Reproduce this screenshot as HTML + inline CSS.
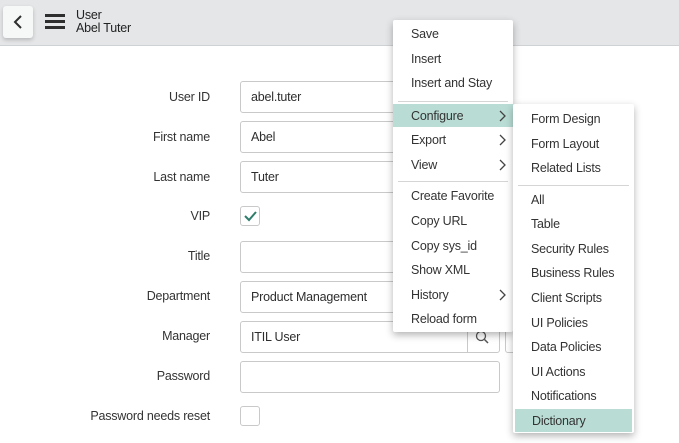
<!DOCTYPE html>
<html><head><style>
*{margin:0;padding:0;box-sizing:border-box}
body{width:679px;height:443px;overflow:hidden;background:#fff;font-family:"Liberation Sans",sans-serif;font-size:12.5px;letter-spacing:-0.2px;color:#2e2e2e;position:relative}
.hdr{position:absolute;left:0;top:0;width:679px;height:46px;background:#e4e6e8;border-bottom:1px solid #cfd2d5}
.back{position:absolute;left:3px;top:6px;width:30px;height:32px;background:#f6f7f7;border-radius:3px;box-shadow:0 2px 4px rgba(0,0,0,.2)}
.ham{position:absolute;left:45px;width:20px;height:3px;background:#2e2e2e}
.t{position:absolute;white-space:nowrap}
.lbl{position:absolute;right:469px;white-space:nowrap;color:#333}
.inp{position:absolute;left:240px;height:32px;border:1px solid #c9c9c9;border-radius:3px;background:#fff;padding-left:10px;line-height:31px}
.cb{position:absolute;left:240px;width:20px;height:20px;border:1px solid #c9c9c9;border-radius:3px;background:#fff}
.menu{position:absolute;background:#fff;box-shadow:0 3px 8px rgba(0,0,0,.3);border-radius:2px}
.mi{position:absolute;left:0;right:0;height:23px;line-height:25px;padding-left:18px;color:#333;white-space:nowrap}
.hl{background:#b9ddd5}
.sep{position:absolute;left:5px;right:5px;height:1px;background:#d5d5d5}
.ar{position:absolute;right:6px;top:6px}
</style></head><body>
<div class="hdr">
<div class="back"><svg width="30" height="32"><path d="M18 10 L12 16 L18 22" stroke="#2e2e2e" stroke-width="2" fill="none"/></svg></div>
<div class="ham" style="top:14px"></div><div class="ham" style="top:20px"></div><div class="ham" style="top:26px"></div>
<div class="t" style="left:76px;top:8px;color:#222">User</div>
<div class="t" style="left:76px;top:21px;color:#222">Abel Tuter</div>
</div>

<div class="lbl" style="top:90px">User ID</div>
<div class="inp" style="top:81px;width:270px">abel.tuter</div>
<div class="lbl" style="top:130px">First name</div>
<div class="inp" style="top:121px;width:270px">Abel</div>
<div class="lbl" style="top:170px">Last name</div>
<div class="inp" style="top:161px;width:270px">Tuter</div>
<div class="lbl" style="top:209px">VIP</div>
<div class="cb" style="top:206px"><svg width="18" height="18"><path d="M4 9 L8 13 L15 5" stroke="#2e7d6b" stroke-width="2" fill="none"/></svg></div>
<div class="lbl" style="top:249px">Title</div>
<div class="inp" style="top:241px;width:270px"></div>
<div class="lbl" style="top:289px">Department</div>
<div class="inp" style="top:281px;width:270px">Product Management</div>
<div class="lbl" style="top:329px">Manager</div>
<div class="inp" style="top:321px;width:260px">ITIL User</div>
<div style="position:absolute;left:467px;top:322px;width:1px;height:30px;background:#c9c9c9"></div>
<svg style="position:absolute;left:474px;top:329px" width="16" height="16"><circle cx="7" cy="7" r="4.5" stroke="#555" stroke-width="1.3" fill="none"/><path d="M10.5 10.5 L14 14" stroke="#555" stroke-width="1.5"/></svg>
<div class="inp" style="top:321px;left:505px;width:20px"></div>
<div class="lbl" style="top:369px">Password</div>
<div class="inp" style="top:361px;width:260px"></div>
<div class="lbl" style="top:409px">Password needs reset</div>
<div class="cb" style="top:406px"></div>

<div class="menu" style="left:393px;top:20px;width:120px;height:312px">
<div class="mi" style="top:2px">Save</div>
<div class="mi" style="top:27px">Insert</div>
<div class="mi" style="top:51px">Insert and Stay</div>
<div class="sep" style="top:81px"></div>
<div class="mi hl" style="top:84px">Configure<svg class="ar" width="10" height="12"><path d="M3 1 L8 6 L3 11" stroke="#444" stroke-width="1.3" fill="none"/></svg></div>
<div class="mi" style="top:108px">Export<svg class="ar" width="10" height="12"><path d="M3 1 L8 6 L3 11" stroke="#444" stroke-width="1.3" fill="none"/></svg></div>
<div class="mi" style="top:133px">View<svg class="ar" width="10" height="12"><path d="M3 1 L8 6 L3 11" stroke="#444" stroke-width="1.3" fill="none"/></svg></div>
<div class="sep" style="top:161px"></div>
<div class="mi" style="top:164px">Create Favorite</div>
<div class="mi" style="top:189px">Copy URL</div>
<div class="mi" style="top:214px">Copy sys_id</div>
<div class="mi" style="top:238px">Show XML</div>
<div class="mi" style="top:263px">History<svg class="ar" width="10" height="12"><path d="M3 1 L8 6 L3 11" stroke="#444" stroke-width="1.3" fill="none"/></svg></div>
<div class="mi" style="top:287px">Reload form</div>
</div>

<div class="menu" style="left:513px;top:104px;width:121px;height:329px">
<div class="mi" style="top:3px">Form Design</div>
<div class="mi" style="top:28px">Form Layout</div>
<div class="mi" style="top:52px">Related Lists</div>
<div class="sep" style="top:81px"></div>
<div class="mi" style="top:84px">All</div>
<div class="mi" style="top:108px">Table</div>
<div class="mi" style="top:133px">Security Rules</div>
<div class="mi" style="top:157px">Business Rules</div>
<div class="mi" style="top:182px">Client Scripts</div>
<div class="mi" style="top:207px">UI Policies</div>
<div class="mi" style="top:231px">Data Policies</div>
<div class="mi" style="top:256px">UI Actions</div>
<div class="mi" style="top:280px">Notifications</div>
<div class="mi hl" style="top:305px;left:2px;right:2px;padding-left:17px">Dictionary</div>
</div>
</body></html>
